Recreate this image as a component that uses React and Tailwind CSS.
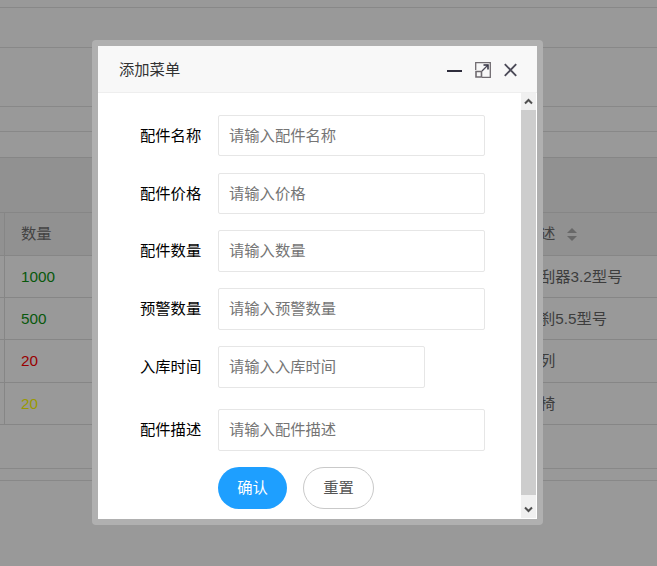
import React from 'react';

const rows = [
  { count: '1000', color: 'text-[#08580c]', desc: '刮器3.2型号', height: 'h-[42px]' },
  { count: '500', color: 'text-[#08580c]', desc: '刹5.5型号', height: 'h-[42px]' },
  { count: '20', color: 'text-[#990000]', desc: '列', height: 'h-[43px]' },
  { count: '20', color: 'text-[#999900]', desc: '椅', height: 'h-[42px]' },
];

const fields = [
  { label: '配件名称', placeholder: '请输入配件名称', width: 'w-[267px]', size: 'h-[41px] mb-[17px]' },
  { label: '配件价格', placeholder: '请输入价格', width: 'w-[267px]', size: 'h-[41px] mb-[16px]' },
  { label: '配件数量', placeholder: '请输入数量', width: 'w-[267px]', size: 'h-[42px] mb-[16px]' },
  { label: '预警数量', placeholder: '请输入预警数量', width: 'w-[267px]', size: 'h-[42px] mb-[16px]' },
  { label: '入库时间', placeholder: '请输入入库时间', width: 'w-[207px]', size: 'h-[42px] mb-[21px]' },
  { label: '配件描述', placeholder: '请输入配件描述', width: 'w-[267px]', size: 'h-[42px] mb-[16px]' },
];

const PartsTable = () => {
  return (
    <div>
      <div className="flex h-[43px] border-b border-[#868686] bg-[#919191] text-[#434343]">
        <div className="w-[5px] border-r border-[#868686]"></div>
        <div className="flex w-[535px] items-center pl-4">数量</div>
        <div className="flex items-center">
          述
          <svg className="ml-3" width="10" height="13" viewBox="0 0 10 13" fill="#686868">
            <path d="M5 0L10 5H0Z" />
            <path d="M0 8H10L5 13Z" />
          </svg>
        </div>
      </div>
      {rows.map((row, index) => (
        <div key={index} className={`flex border-b border-[#868686] text-[#3d3d3d] ${row.height}`}>
          <div className="w-[5px] border-r border-[#868686]"></div>
          <div className={`flex w-[535px] items-center pl-4 ${row.color}`}>{row.count}</div>
          <div className="flex items-center whitespace-nowrap">{row.desc}</div>
        </div>
      ))}
    </div>
  );
};

const ScrollBar = () => {
  return (
    <div className="mr-px flex h-[425px] w-[15px] flex-col bg-[#f0f0f0]">
      <div className="flex h-[17px] items-center justify-center">
        <svg width="9" height="7" viewBox="0 0 9 7" fill="none" stroke="#505050" strokeWidth="2">
          <path d="M1 5.5L4.5 2L8 5.5" />
        </svg>
      </div>
      <div className="h-[385px] bg-[#cdcdcd]"></div>
      <div className="flex flex-1 items-center justify-center pt-1.5">
        <svg width="9" height="7" viewBox="0 0 9 7" fill="none" stroke="#505050" strokeWidth="2">
          <path d="M1 1.5L4.5 5L8 1.5" />
        </svg>
      </div>
    </div>
  );
};

const AddDialog = () => {
  return (
    <div className="absolute left-[92px] top-[40px] h-[485px] w-[451px] rounded-[4px] bg-[#b0b0b0] p-[6px]">
      <div className="h-[473px] bg-white">
        <div className="flex h-[47px] items-center justify-between border-b border-[#eeeeee] bg-[#f8f8f8] pl-[21px] pr-[20px] text-[#333333]">
          <span className="pt-0.5">添加菜单</span>
          <div className="flex items-center pt-[2px]">
            <svg width="15" height="16" viewBox="0 0 15 16" fill="#2e2d3c">
              <path d="M0 8H15V10H0Z" />
            </svg>
            <svg className="ml-[13px]" width="16" height="16" viewBox="0 0 16 16" fill="none" stroke="#706b70">
              <path d="M.7 8V.7H15.3V15.3H7" strokeWidth="1.3" />
              <path d="M1 9.5H6.5V15H1Z" strokeWidth="1.6" />
              <path d="M7 9L12.5 3.5" strokeWidth="1.3" stroke="#4c4b58" />
              <path d="M8.5 3H13V7.5" strokeWidth="1.5" stroke="#2e2d3c" />
            </svg>
            <svg className="ml-[13px]" width="13" height="14" viewBox="0 0 13 14" fill="none" stroke="#4c4b58" strokeWidth="1.9">
              <path d="M.8 1.2L12.2 12.8M12.2 1.2L.8 12.8" />
            </svg>
          </div>
        </div>
        <div className="flex">
          <form className="w-[423px] pt-[22px]">
            {fields.map((field) => (
              <div key={field.label} className={`flex items-center ${field.size}`}>
                <label className="w-[120px] pl-[42px] text-black">{field.label}</label>
                <input
                  className={`h-full rounded-[2px] border border-[#e6e6e6] bg-white pl-[10px] text-[#333333] outline-none placeholder:text-[#757575] ${field.width}`}
                  type="text"
                  placeholder={field.placeholder}
                />
              </div>
            ))}
            <div className="flex pl-[120px]">
              <button type="button" className="h-[42px] w-[69px] rounded-full bg-[#1e9fff] text-white">确认</button>
              <button type="button" className="ml-4 h-[42px] w-[71px] rounded-full border border-[#c9c9c9] bg-white text-[#555555]">重置</button>
            </div>
          </form>
          <ScrollBar />
        </div>
      </div>
    </div>
  );
};

const App = () => {
  return (
    <div className="relative h-[566px] w-[657px] overflow-hidden bg-[#999999] font-['Liberation_Sans','Noto_Sans_CJK_SC',sans-serif] text-[15.3px] leading-6">
      <div className="h-2 border-b border-[#888888]"></div>
      <div className="h-10 border-b border-[#888888]"></div>
      <div className="h-[59px] border-b border-[#888888]"></div>
      <div className="h-[25px] border-b border-[#888888]"></div>
      <div className="h-[25px]"></div>
      <div className="h-14 border-y border-[#868686] bg-[#919191]"></div>
      <PartsTable />
      <div className="h-11 border-b border-[#888888]"></div>
      <div className="h-3 border-b border-[#888888]"></div>
      <AddDialog />
    </div>
  );
};

export default App;
